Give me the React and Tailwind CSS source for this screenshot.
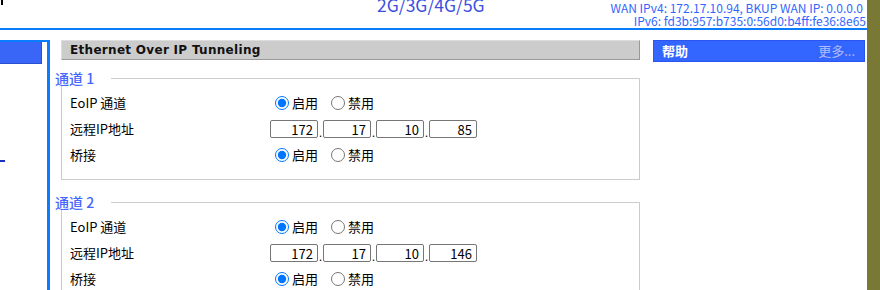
import React from "react";

const FONT = { fontFamily: '"Noto Sans CJK SC", "Noto Sans", sans-serif' };

function Radio({ checked }) {
  return (
    <input
      type="radio"
      readOnly
      checked={checked}
      className="m-0 h-[14px] w-[14px] accent-[#0075ff]"
    />
  );
}

function RadioPair() {
  return (
    <div className="flex items-center pl-[5px] text-[13px] text-black">
      <Radio checked />
      <span className="ml-[3px]">启用</span>
      <span className="ml-[13px] flex items-center">
        <Radio checked={false} />
      </span>
      <span className="ml-[3px]">禁用</span>
    </div>
  );
}

function IpBox({ v }) {
  return (
    <div className="flex h-[18px] w-[48px] items-center justify-end rounded-[2px] border border-[#767676] pr-[4px] text-[13px] leading-none text-black">
      {v}
    </div>
  );
}

function IpInput({ parts }) {
  return (
    <div className="flex items-end">
      <IpBox v={parts[0]} />
      <span className="w-[5px] text-center text-[11px] leading-[12px]">.</span>
      <IpBox v={parts[1]} />
      <span className="w-[5px] text-center text-[11px] leading-[12px]">.</span>
      <IpBox v={parts[2]} />
      <span className="w-[5px] text-center text-[11px] leading-[12px]">.</span>
      <IpBox v={parts[3]} />
    </div>
  );
}

function Row({ label, children }) {
  return (
    <div className="flex h-[26px] items-center">
      <div className="w-[208px] shrink-0 pl-[8px] text-[13px] text-black">{label}</div>
      {children}
    </div>
  );
}

function Tunnel({ n, ip, className }) {
  return (
    <fieldset className={"ml-[6px] min-w-0 border border-[#cccccc] px-0 pb-[11px] pt-0 " + className}>
      <legend className="-ml-[7px] pr-[17px] text-[14px] font-medium leading-[14px] text-[#4466ff]">
        通道 {n}
      </legend>
      <div className="mt-[5px]">
        <Row label="EoIP 通道">
          <RadioPair />
        </Row>
        <Row label="远程IP地址">
          <IpInput parts={ip} />
        </Row>
        <Row label="桥接">
          <RadioPair />
        </Row>
      </div>
    </fieldset>
  );
}

export default function App() {
  return (
    <div className="flex h-[290px] w-[880px] overflow-hidden bg-[#797834]" style={FONT}>
      <div className="flex w-[867px] flex-col bg-white">
        {/* header */}
        <div className="flex h-[30px] shrink-0 border-b-2 border-[#0a7cff]">
          <div className="ml-[1px] mt-0 h-[5px] w-[2px] bg-black" />
          <div className="ml-[374px] -mt-[4px] text-[17.5px] leading-[17px] text-[#3c50e0]">
            2G/3G/4G/5G
          </div>
          <div className="flex-1" />
          <div className="pr-[4px] pt-[1px] text-right text-[12px] leading-[13px] text-[#3366ff]">
            <div>WAN IPv4: 172.17.10.94, BKUP WAN IP: 0.0.0.0</div>
            <div className="-mr-[3px]">IPv6: fd3b:957:b735:0:56d0:b4ff:fe36:8e65</div>
          </div>
        </div>
        {/* body */}
        <div className="flex flex-1">
          {/* sidebar */}
          <div className="mt-[10px] flex w-[50px] shrink-0 flex-col items-start border-r-[3px] border-t-2 border-[#0a7cff]">
            <div className="h-[22px] w-[42px] shrink-0 border-b border-r border-[#2a4fd0] bg-[#3a66f8]" />
            <div className="mt-[96px] h-[2px] w-[5px] bg-[#1a2ec0]" />
          </div>
          {/* content */}
          <div className="ml-[5px] mt-[10px] w-[585px] shrink-0">
            <div className="ml-[6px] flex h-[20px] items-center border border-b-[#999999] border-l-[#dddddd] border-r-[#999999] border-t-[#dddddd] bg-[#cccccc] pl-[8px]">
              <span
                className="text-[12px] font-bold leading-none tracking-[0.3px] text-[#111111]"
                style={{ fontFamily: '"DejaVu Sans", sans-serif' }}
              >
                Ethernet Over IP Tunneling
              </span>
            </div>
            <Tunnel n={1} ip={["172", "17", "10", "85"]} className="mt-[11px]" />
            <Tunnel n={2} ip={["172", "17", "10", "146"]} className="mt-[15px]" />
          </div>
          {/* help */}
          <div className="ml-[13px] mt-[10px] w-[212px] shrink-0">
            <div className="flex h-[22px] items-center justify-between border border-[#2a55ee] bg-[#3366ff] pl-[8px] pr-[9px] text-[13px]">
              <span className="font-bold text-white">帮助</span>
              <span className="text-[#b4bcff]">更多...</span>
            </div>
          </div>
        </div>
      </div>
    </div>
  );
}
